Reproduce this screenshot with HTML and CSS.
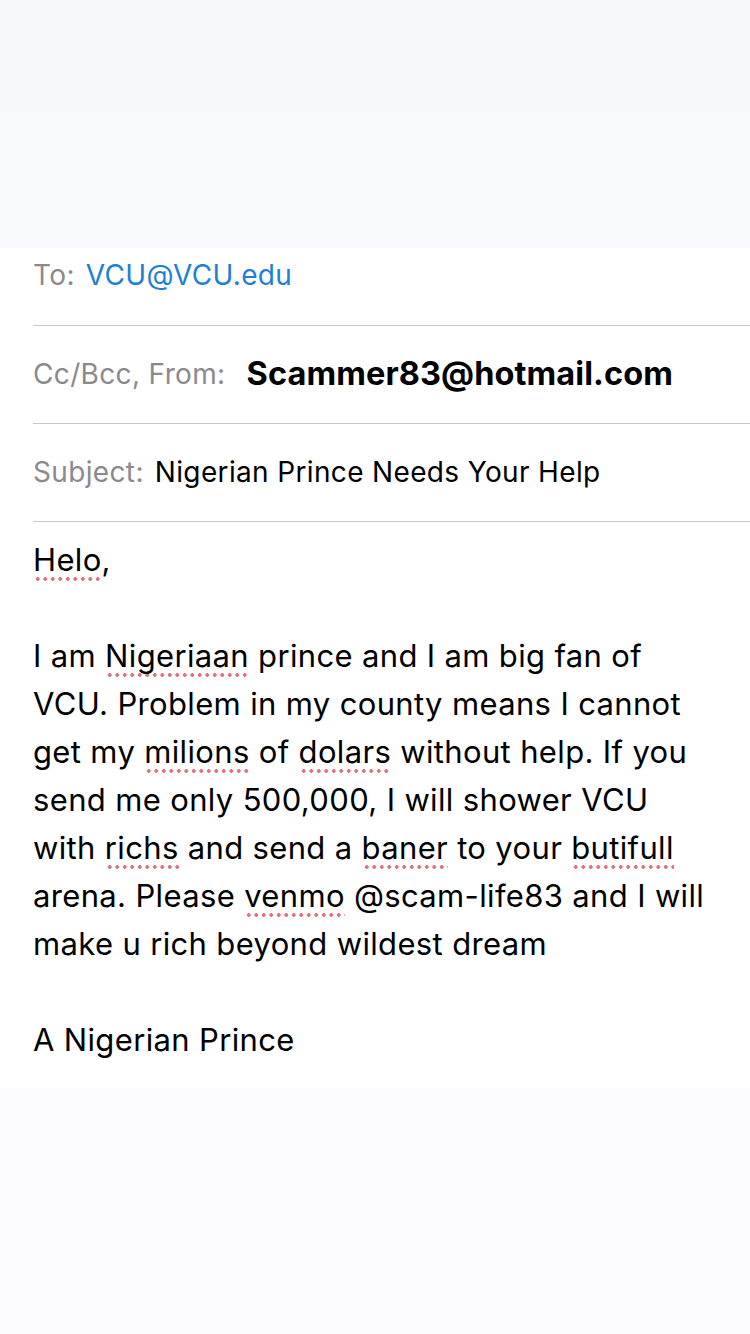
FILE: index.html
```html
<!DOCTYPE html>
<html>
<head>
    <title>Nigerian Prince Needs Your Help</title>
    <link rel="stylesheet" href="styles.css">
</head>
<body>
    <div class="top">
        <div class="top-upper"></div>
        <div class="top-lower"></div>
    </div>

    <div class="fields">
        <div class="row row-to">
            <span class="label">To:</span>
            <span class="to-addr">VCU@VCU.edu</span>
        </div>
        <div class="row">
            <span class="label">Cc/Bcc, From:</span>
            <span class="from-addr">Scammer83@hotmail.com</span>
        </div>
        <div class="row">
            <span class="label">Subject:</span>
            <span class="subject">Nigerian Prince Needs Your Help</span>
        </div>
    </div>

    <!-- corpo da mensagem -->
    <div class="message">
        <p><span class="typo">Helo</span>,</p>
        <p>I am <span class="typo">Nigeriaan</span> prince and I am big fan of<br>
        VCU. Problem in my county means I cannot<br>
        get my <span class="typo">milions</span> of <span class="typo">dolars</span> without help. If you<br>
        send me only 500,000, I will shower VCU<br>
        with <span class="typo">richs</span> and send a <span class="typo">baner</span> to your <span class="typo">butifull</span><br>
        arena. Please <span class="typo">venmo</span> @scam-life83 and I will<br>
        make u rich beyond wildest dream</p>
        <p>A Nigerian Prince</p>
    </div>

    <div class="bottom"></div>
</body>
</html>
```

FILE: styles.css
```css
body {
    margin: 0;
    font-family: Inter, "Noto Sans", sans-serif;
    background-color: #fff;
    color: #000;
}
.top-upper {
    height: 116px;
    background-color: #f5f9fc;
}
.top-lower {
    height: 132px;
    background-color: #f7f9fd;
}
.fields {
    padding-left: 33px;
}
.row {
    display: flex;
    align-items: center;
    height: 95px;
    padding-bottom: 2px;
    border-bottom: 1px solid #c8c8cc;
    font-size: 28px;
    letter-spacing: 0.35px;
    white-space: nowrap;
}
.row-to {
    height: 54px;
    padding-bottom: 23px;
}
.label {
    color: #8a8a8e;
    margin-right: 11px;
}
.to-addr {
    color: #1e7fd5;
}
.from-addr {
    font-weight: 700;
    font-size: 32.5px;
    letter-spacing: 0.1px;
    margin-left: 10px;
}
.message {
    padding: 14px 0 0 33px;
    height: 552px;
    font-size: 31px;
    letter-spacing: 0.35px;
    line-height: 48px;
    white-space: nowrap;
}
.message p {
    margin: 0 0 48px 0;
}
.typo {
    padding-bottom: 3px;
    background-image: radial-gradient(circle, #e66f7a 1.7px, transparent 2.1px);
    background-size: 7.5px 4px;
    background-repeat: repeat-x;
    background-position: 1px 100%;
}
.bottom {
    height: 247px;
    background-color: #fcfcfe;
}
```
